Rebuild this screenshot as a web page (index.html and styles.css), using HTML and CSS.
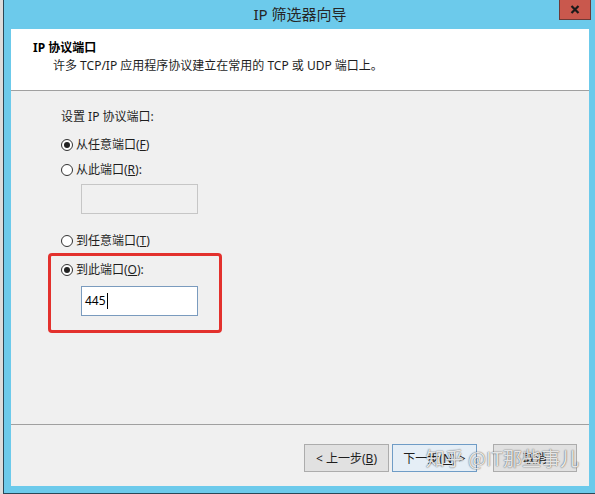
FILE: index.html
```html
<!DOCTYPE html>
<html>
<head>
	<meta charset="utf-8">
	<title>IP 筛选器向导</title>
	<link rel="stylesheet" href="styles.css">
</head>
<body>
<div class="window">
	<div class="titlebar">
		<span class="title">IP 筛选器向导</span>
		<span class="close">
			<svg width="10" height="9" viewBox="0 0 10 9"><path d="M1.5 1 L8.5 8 M8.5 1 L1.5 8" stroke="#1a1a1a" stroke-width="2.2"/></svg>
		</span>
	</div>

	<div class="client">
		<div class="header">
			<div class="head-title">IP 协议端口</div>
			<div class="head-sub">许多 TCP/IP 应用程序协议建立在常用的 TCP 或 UDP 端口上。</div>
		</div>

		<div class="page">
			<div class="group-label">设置 IP 协议端口:</div>

			<div class="radio first checked"><span class="dot"></span>从任意端口(<u>F</u>)</div>
			<div class="radio"><span class="dot"></span>从此端口(<u>R</u>):</div>
			<div class="textbox disabled"></div>

			<div class="radio third"><span class="dot"></span>到任意端口(<u>T</u>)</div>

			<div class="mark">
				<div class="radio checked"><span class="dot"></span>到此端口(<u>O</u>):</div>
				<div class="textbox">445<span class="caret"></span></div>
			</div>
		</div>

		<div class="footer">
			<button class="btn">&lt; 上一步(<u>B</u>)</button>
			<button class="btn default">下一步(<u>N</u>) &gt;</button>
			<button class="btn cancel">取消</button>
			<span class="watermark">知乎 @IT那些事儿</span>
		</div>
	</div>
</div>
</body>
</html>
```

FILE: styles.css
```css
body {
	margin: 0;
	background: #dcdcdc;
	font-family: "Noto Sans", "Noto Sans CJK SC", sans-serif;
	font-size: 12px;
	color: #1e1e1e;
}

/* frame */
.window {
	margin-left: 3px;
	height: 494px;
	box-sizing: border-box;
	border-left: 1px solid #2b4756;
	border-bottom: 1px solid #2b4756;
	background: #6ccaeb;
	padding: 0 6px 7px 7px;
	display: flex;
	flex-direction: column;
}
.titlebar {
	height: 29px;
	display: flex;
	align-items: center;
	justify-content: center;
	position: relative;
}
.title {
	font-size: 15px;
	line-height: 20px;
	color: #262626;
	margin-top: -2px;
}
.close {
	position: absolute;
	top: 0;
	right: -2px;
	width: 32px;
	height: 20px;
	box-sizing: border-box;
	background: #c9584d;
	border: 1px solid #6d3a37;
	border-top: none;
	display: flex;
	align-items: center;
	justify-content: center;
}

.client {
	flex: 1;
	background: #f0f0f0;
	display: flex;
	flex-direction: column;
}

/* wizard header */
.header {
	height: 62px;
	box-sizing: border-box;
	background: #fff;
	border-bottom: 1px solid #a0a0a0;
	padding: 11px 0 0 22px;
	line-height: 16px;
}
.head-title { font-weight: bold; color: #000; }
.head-sub { margin: 2px 0 0 20px; }

/* page body */
.page {
	flex: 1;
	padding: 18px 0 0 50px;
	line-height: 16px;
}
.radio {
	display: flex;
	align-items: center;
	margin-top: 9px;
}
.radio.first { margin-top: 12px; }
.radio.third { margin-top: 19px; }
.dot {
	width: 12px;
	height: 12px;
	box-sizing: border-box;
	border: 1px solid #333;
	border-radius: 50%;
	background: #fff;
	margin-right: 3px;
	display: flex;
	align-items: center;
	justify-content: center;
}
.checked .dot::after {
	content: "";
	width: 6px;
	height: 6px;
	border-radius: 50%;
	background: #222;
}
.textbox {
	width: 117px;
	height: 30px;
	box-sizing: border-box;
	margin: 6px 0 0 20px;
	border: 1px solid #7a9bbe;
	background: #fff;
	padding-left: 3px;
	display: flex;
	align-items: center;
	color: #000;
}
.textbox.disabled {
	border-color: #c6c6c6;
	background: #f0f0f0;
}
.caret {
	width: 1px;
	height: 16px;
	background: #000;
	margin-left: 1px;
}

/* red highlight round the last option */
.mark {
	width: 174px;
	box-sizing: border-box;
	margin: 4px 0 0 -13px;
	border: 3px solid #e3312d;
	border-radius: 4px;
	padding: 6px 0 14px 10px;
}
.mark .radio { margin-top: 0; }
.mark .textbox { margin-top: 8px; }

/* buttons */
.footer {
	height: 62px;
	box-sizing: border-box;
	border-top: 1px solid #a0a0a0;
	padding: 19px 12px 0 0;
	display: flex;
	justify-content: flex-end;
	align-items: flex-start;
	gap: 3px;
	position: relative;
}
.btn {
	width: 85px;
	height: 28px;
	font: inherit;
	color: #1e1e1e;
	background: #e1e1e1;
	border: 1px solid #acacac;
	padding: 0;
}
.btn.default {
	background: #e5eef6;
	border-color: #6f9cc6;
}
.btn.cancel {
	width: 84px;
	margin-left: 13px;
}
.watermark {
	position: absolute;
	right: 10px;
	top: 21px;
	font-family: "Noto Sans CJK SC", sans-serif;
	font-size: 19px;
	line-height: 24px;
	color: rgba(255, 255, 255, 0.85);
	text-shadow: 0 0 1px rgba(0, 0, 0, 0.6), 0 0 2px rgba(0, 0, 0, 0.3);
}
```
